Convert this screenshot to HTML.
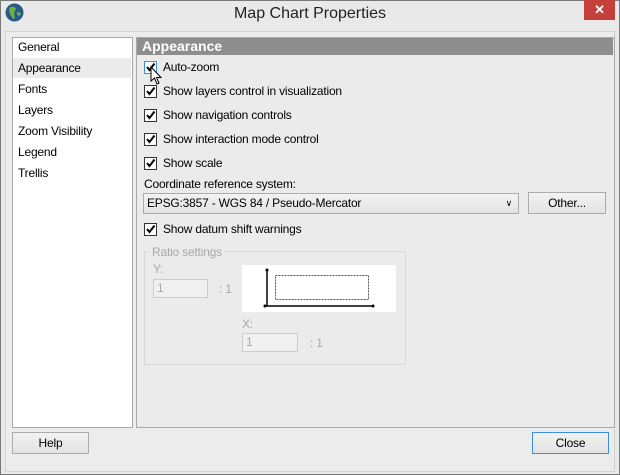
<!DOCTYPE html><html><head><style>
body{margin:0;width:620px;height:475px;background:#fff;font-family:"Liberation Sans",sans-serif;font-size:12px;color:#000;position:relative;overflow:hidden;letter-spacing:-0.2px}
.a{position:absolute}
.win{left:0;top:0;width:618px;height:473px;background:#e9e9e9;border:1px solid #7a7a7a}
.cb{width:11px;height:11px;border:1px solid #333;background:#fff}
.cb svg{position:absolute;left:0;top:0}
.btn{background:linear-gradient(#f2f2f2,#e3e3e3);border:1px solid #acacac;text-align:center;line-height:20px}
.g{color:#a8a8a8}
.inp{background:#f0f0f0;border:1px solid #ccc;color:#a8a8a8;line-height:17px;padding-left:3px;box-sizing:border-box}
</style></head><body>
<div class="a win"></div>
<svg class="a" style="left:5px;top:3px" width="19" height="19"><circle cx="9.5" cy="9.5" r="9" fill="#2a5a8a"/><path d="M5 4 Q10 3 11 6 L9 10 L10 15 L8 16 L5 11 L4 7Z" fill="#6cb33e"/><path d="M12 9 L16 10 L15 13 L12 12Z" fill="#6cb33e"/></svg>
<div class="a" style="left:0;width:620px;top:5px;text-align:center;font-size:16px;color:#222;letter-spacing:0">Map Chart Properties</div>
<div class="a" style="left:584px;top:0;width:31px;height:20px;background:#c4403a;color:#fff;text-align:center;font-size:13px;line-height:19px;font-weight:bold">✕</div>
<div class="a" style="left:5px;top:31px;width:608px;height:439px;border:1px solid #d2d2d2;background:#ececec"></div>
<div class="a" style="left:12px;top:37px;width:119px;height:389px;background:#fff;border:1px solid #a9a9a9"></div>
<div class="a" style="left:13px;top:58px;width:118px;height:20px;background:#ebebeb"></div>
<div class="a" style="left:18px;top:37px;line-height:21px">General<br>Appearance<br>Fonts<br>Layers<br>Zoom Visibility<br>Legend<br>Trellis</div>
<div class="a" style="left:136px;top:37px;width:477px;height:389px;border:1px solid #a9a9a9;background:#ebebeb"></div>
<div class="a" style="left:137px;top:38px;width:476px;height:17px;background:#8e8e8e;color:#fff;font-weight:bold;font-size:14px;line-height:17px;padding-left:5px;box-sizing:border-box;letter-spacing:0">Appearance</div>
<div class="a cb" style="left:144px;top:61px;border-color:#3b8de0"><svg width="11" height="11"><path d="M2 5 L4.5 8 L9.5 1.5" stroke="#000" stroke-width="2" fill="none"/></svg></div><div class="a" style="left:163px;top:60px">Auto-zoom</div>
<div class="a cb" style="left:144px;top:85px"><svg width="11" height="11"><path d="M2 5 L4.5 8 L9.5 1.5" stroke="#000" stroke-width="2" fill="none"/></svg></div><div class="a" style="left:163px;top:84px">Show layers control in visualization</div>
<div class="a cb" style="left:144px;top:109px"><svg width="11" height="11"><path d="M2 5 L4.5 8 L9.5 1.5" stroke="#000" stroke-width="2" fill="none"/></svg></div><div class="a" style="left:163px;top:108px">Show navigation controls</div>
<div class="a cb" style="left:144px;top:133px"><svg width="11" height="11"><path d="M2 5 L4.5 8 L9.5 1.5" stroke="#000" stroke-width="2" fill="none"/></svg></div><div class="a" style="left:163px;top:132px">Show interaction mode control</div>
<div class="a cb" style="left:144px;top:157px"><svg width="11" height="11"><path d="M2 5 L4.5 8 L9.5 1.5" stroke="#000" stroke-width="2" fill="none"/></svg></div><div class="a" style="left:163px;top:156px">Show scale</div>
<svg class="a" style="left:150px;top:66px" width="14" height="20"><path d="M1 1 L1 15 L4.5 12 L7 18 L9 17 L6.5 11.5 L11 11.5Z" fill="#fff" stroke="#000"/></svg>
<div class="a" style="left:144px;top:177px">Coordinate reference system:</div>
<div class="a" style="left:143px;top:193px;width:376px;height:21px;border:1px solid #acacac;background:linear-gradient(#f2f2f2,#e4e4e4);box-sizing:border-box;line-height:19px;padding-left:3px">EPSG:3857 - WGS 84 / Pseudo-Mercator<span style="position:absolute;right:6px;top:0;font-size:9px">&#8744;</span></div>
<div class="a btn" style="left:528px;top:192px;width:76px;height:20px">Other...</div>
<div class="a cb" style="left:144px;top:223px"><svg width="11" height="11"><path d="M2 5 L4.5 8 L9.5 1.5" stroke="#000" stroke-width="2" fill="none"/></svg></div><div class="a" style="left:163px;top:222px">Show datum shift warnings</div>
<div class="a" style="left:144px;top:251px;width:260px;height:112px;border:1px solid #d8d8d8"></div>
<div class="a g" style="left:150px;top:245px;background:#ebebeb;padding:0 2px">Ratio settings</div>
<div class="a g" style="left:153px;top:262px">Y:</div>
<div class="a inp" style="left:153px;top:279px;width:55px;height:19px">1</div>
<div class="a g" style="left:219px;top:282px">: 1</div>
<svg class="a" style="left:242px;top:265px" width="154" height="47"><rect width="154" height="47" fill="#fff"/><path d="M25 6 V41 H130" stroke="#000" stroke-width="1.5" fill="none"/><circle cx="25" cy="5" r="1.5"/><circle cx="23" cy="41" r="1.5"/><circle cx="131" cy="41" r="1.5"/><rect x="33.5" y="10.5" width="93" height="24" fill="none" stroke="#555" stroke-dasharray="2,1"/></svg>
<div class="a g" style="left:242px;top:317px">X:</div>
<div class="a inp" style="left:242px;top:333px;width:56px;height:19px">1</div>
<div class="a g" style="left:310px;top:336px">: 1</div>
<div class="a btn" style="left:12px;top:432px;width:75px;height:20px">Help</div>
<div class="a btn" style="left:532px;top:432px;width:75px;height:20px;border-color:#3c8ee6">Close</div>
</body></html>
